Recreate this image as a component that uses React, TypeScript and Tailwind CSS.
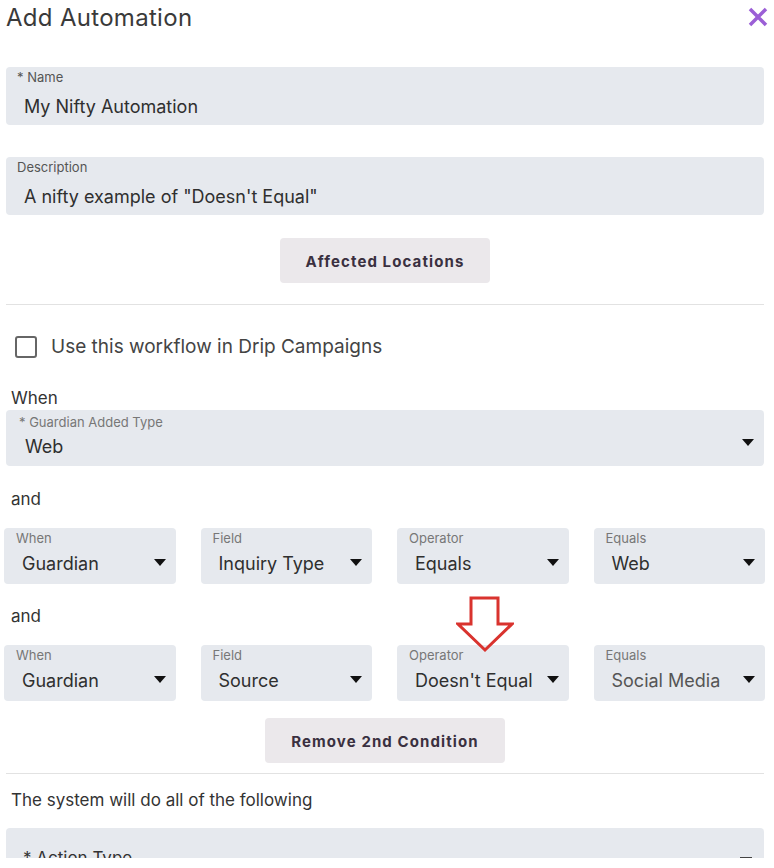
import React from 'react'

const font = { fontFamily: 'Inter, "Noto Sans", sans-serif' }

const rows = [
  [
    { label: 'When', value: 'Guardian' },
    { label: 'Field', value: 'Inquiry Type' },
    { label: 'Operator', value: 'Equals' },
    { label: 'Equals', value: 'Web' },
  ],
  [
    { label: 'When', value: 'Guardian' },
    { label: 'Field', value: 'Source' },
    { label: 'Operator', value: "Doesn't Equal" },
    { label: 'Equals', value: 'Social Media', muted: true },
  ],
]

function Caret() {
  return (
    <svg width="12" height="7" viewBox="0 0 12 7" className="mt-[29px] shrink-0">
      <path d="M0 0 H12 L6 7 Z" fill="#111" />
    </svg>
  )
}

function TextField({ label, value }: { label: string; value: string }) {
  return (
    <div className="h-[58px] rounded-[4px] bg-[#e6e9ee] pl-[11px] pt-[2px]">
      <div className="text-[13px] leading-[16px] text-[#555]">{label}</div>
      <div className="mt-[9px] pl-[7px] text-[18px] leading-[26px] text-[#2f2f2f]">{value}</div>
    </div>
  )
}

function Select({ label, value, muted }: { label: string; value: string; muted?: boolean }) {
  return (
    <div className="flex h-[56px] items-start rounded-[4px] bg-[#e6e9ee] pr-[10px] pt-[2px]">
      <div className="min-w-0 flex-1 pl-[12px]">
        <div className="text-[13px] leading-[16px] text-[#777]">{label}</div>
        <div className={`mt-[6px] pl-[6px] text-[18px] leading-[24px] ${muted ? 'text-[#555]' : 'text-[#2f2f2f]'}`}>
          {value}
        </div>
      </div>
      <Caret />
    </div>
  )
}

function Button({ children }: { children: React.ReactNode }) {
  return (
    <div className="flex justify-center">
      <button className="h-[45px] rounded-[4px] bg-[#ebe8eb] px-[26px] pt-[3px] text-[15px] font-bold tracking-[1.1px] text-[#3a3040]">
        {children}
      </button>
    </div>
  )
}

export default function App() {
  return (
    <div className="h-[858px] w-[774px] overflow-hidden bg-white" style={font}>
      <div className="flex h-[36px] items-center justify-between pl-[6px] pr-[6px]">
        <h1 className="text-[24px] tracking-[0.3px] text-[#3a3a3a]">Add Automation</h1>
        <svg width="20" height="20" viewBox="0 0 20 20" className="mt-[-2px]">
          <path d="M2 2 L18 18 M18 2 L2 18" stroke="#9b5fd6" strokeWidth="3.5" />
        </svg>
      </div>

      <div className="pl-[6px] pr-[10px]">
        <div className="mt-[31px]">
          <TextField label="* Name" value="My Nifty Automation" />
        </div>
        <div className="mt-[32px]">
          <TextField label="Description" value={'A nifty example of "Doesn\'t Equal"'} />
        </div>

        <div className="mt-[23px]">
          <Button>Affected Locations</Button>
        </div>

        <div className="mt-[21px] h-px bg-[#e2e2e2]" />

        <label className="mt-[30px] flex items-center gap-[14px] pl-[9px]">
          <span className="h-[22px] w-[22px] rounded-[3px] border-2 border-[#666]" />
          <span className="text-[19px] leading-[24px] text-[#444]">Use this workflow in Drip Campaigns</span>
        </label>

        <div className="mt-[27px] pl-[5px] text-[17px] leading-[24px] text-[#333]">When</div>
        <div className="flex h-[56px] items-start rounded-[4px] bg-[#e6e9ee] pr-[10px] pt-[4px]">
          <div className="flex-1 pl-[13px]">
            <div className="text-[13px] leading-[16px] text-[#777]">* Guardian Added Type</div>
            <div className="mt-[5px] pl-[6px] text-[18px] leading-[24px] text-[#2f2f2f]">Web</div>
          </div>
          <svg width="12" height="7" viewBox="0 0 12 7" className="mt-[25px] shrink-0">
            <path d="M0 0 H12 L6 7 Z" fill="#111" />
          </svg>
        </div>

        <div className="relative -ml-[2px] mr-[-1px]">
          {rows.map((row, i) => (
            <div key={i}>
              <div className={`${i === 0 ? 'mt-[21px]' : 'mt-[20px]'} pl-[7px] text-[17px] leading-[24px] text-[#333]`}>and</div>
              <div className="mt-[17px] grid grid-cols-4 gap-x-[25px]">
                {row.map((f) => (
                  <Select key={f.label} label={f.label} value={f.value} muted={f.muted} />
                ))}
              </div>
            </div>
          ))}
          <svg
            width="58"
            height="58"
            viewBox="0 0 58 58"
            className="absolute left-[452px] top-[109px]"
          >
            <path
              d="M15 2 H42 V28 H56 L29 54 L2 28 H15 Z"
              fill="none"
              stroke="#d9332e"
              strokeWidth="3"
            />
          </svg>
        </div>

        <div className="mt-[17px]">
          <Button>Remove 2nd Condition</Button>
        </div>

        <div className="mt-[10px] h-px bg-[#e2e2e2]" />

        <div className="mt-[14px] pl-[5px] text-[17px] leading-[24px] text-[#333]">The system will do all of the following</div>

        <div className="mt-[16px] flex h-[80px] items-start justify-between rounded-[4px] bg-[#e6e9ee] pl-[17px] pr-[12px] pt-[18px]">
          <div className="text-[17px] leading-[24px] text-[#333]">* Action Type</div>
          <div className="mt-[11px] h-[2px] w-[12px] bg-[#444]" />
        </div>
      </div>
    </div>
  )
}
